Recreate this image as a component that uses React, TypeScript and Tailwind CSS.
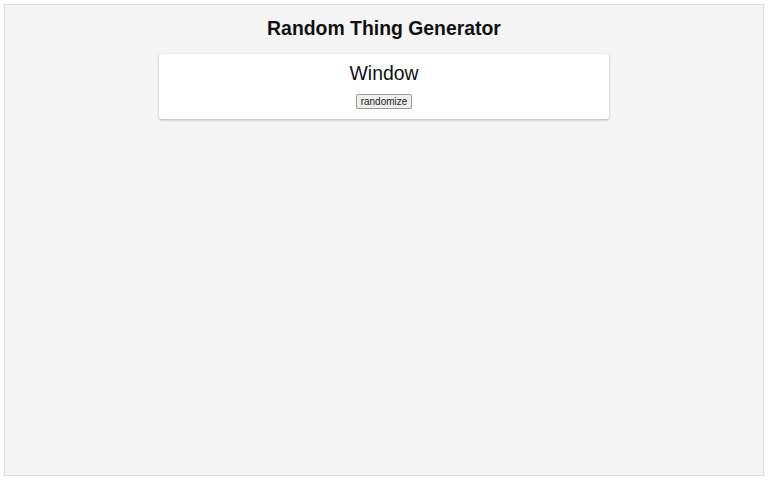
import React, { useState } from 'react';

const THINGS = ['Window', 'Teapot', 'Bicycle', 'Lantern', 'Umbrella', 'Pencil', 'Cactus', 'Kettle'];

const App: React.FC = () => {
  const [thing, setThing] = useState('Window');

  const randomize = () => {
    setThing(THINGS[Math.floor(Math.random() * THINGS.length)]);
  };

  return (
    <div className="bg-white p-1" style={{ fontFamily: '"Liberation Sans", Arial, sans-serif' }}>
      <div className="h-[472px] border border-[#dcdcdc] bg-[#f5f5f5] flex flex-col items-center pt-[12px]">
        <h1 className="text-[19.4px] leading-[22px] font-bold text-[#111]">Random Thing Generator</h1>
        <div className="mt-[15px] w-[450px] bg-white rounded-[3px] shadow-[0_1px_3px_rgba(0,0,0,0.25)] flex flex-col items-center pt-[8px] pb-[10px]">
          <div className="text-[19.4px] leading-[22px] text-[#111]">{thing}</div>
          <button
            onClick={randomize}
            className="mt-[10px] h-[15px] px-[4px] text-[10px] leading-[13px] text-[#222] bg-[#efefef] border border-[#999] rounded-[2px]"
          >
            randomize
          </button>
        </div>
      </div>
    </div>
  );
};

export default App;
